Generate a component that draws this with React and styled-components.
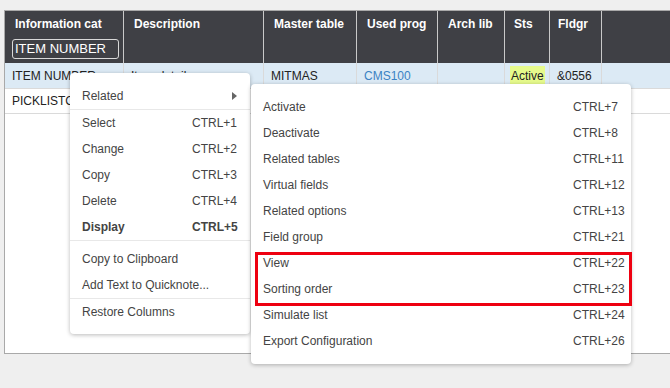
import React from "react";
import styled, { createGlobalStyle } from "styled-components";

const GlobalStyle = createGlobalStyle`
  html, body {
    margin: 0;
    padding: 0;
    background: #efefef;
    font-family: "Liberation Sans", Arial, sans-serif;
    overflow: hidden;
  }
`;

const Page = styled.div`
  position: relative;
  width: 670px;
  height: 388px;
  padding: 10px 0 0 4px;
  box-sizing: border-box;
  overflow: hidden;
`;

const Panel = styled.div`
  width: 666px;
  height: 344px;
  background: #fff;
  border: 1px solid #a9a9a9;
  border-right: none;
  box-sizing: border-box;
`;

const cols = "119px 140px 93px 81px 67px 45px 52px 1fr";

const HeaderRow = styled.div`
  display: grid;
  grid-template-columns: ${cols};
  height: 52px;
  background: #3f4045;
`;

const HeadCell = styled.div`
  border-right: 1px solid #c9c9c9;
  padding: 6px 0 0 ${(p) => p.$pad || 10}px;
  color: #fff;
  font-weight: bold;
  font-size: 12px;
  line-height: 14px;
  &:last-child {
    border-right: none;
  }
`;

const FilterInput = styled.div`
  margin: 8px 0 0 -3px;
  width: 107px;
  height: 20px;
  box-sizing: border-box;
  border: 1px solid #d8d8d8;
  border-radius: 3px;
  color: #fff;
  font-weight: normal;
  font-size: 13px;
  line-height: 18px;
  padding-left: 2px;
`;

const Row = styled.div`
  display: grid;
  grid-template-columns: ${cols};
  height: ${(p) => p.$h}px;
  background: ${(p) => (p.$selected ? "#dceaf5" : "#fff")};
  border-bottom: 1px solid #dadada;
  box-sizing: border-box;
`;

const Cell = styled.div`
  border-right: 1px solid #dadada;
  padding-left: ${(p) => p.$pad || 7}px;
  font-size: 12px;
  color: ${(p) => (p.$link ? "#3b82c4" : "#222")};
  display: flex;
  align-items: center;
  white-space: nowrap;
  overflow: hidden;
  &:last-child {
    border-right: none;
  }
`;

const StatusTag = styled.span`
  background: #e6fa8c;
  padding: 3px 1px;
`;

const Menu = styled.div`
  position: absolute;
  left: ${(p) => p.$left}px;
  top: ${(p) => p.$top}px;
  width: ${(p) => p.$width}px;
  padding: ${(p) => p.$padTop}px 0 ${(p) => p.$padBottom}px;
  background: #fff;
  border-radius: 4px;
  box-shadow: 0 1px 4px rgba(0, 0, 0, 0.28);
  box-sizing: border-box;
`;

const Item = styled.div`
  display: flex;
  align-items: center;
  height: 26px;
  padding-left: 12px;
  font-size: 12px;
  color: #444;
  font-weight: ${(p) => (p.$bold ? "bold" : "normal")};
`;

const Label = styled.span`
  flex: 1;
`;

const Shortcut = styled.span`
  width: 58px;
`;

const Arrow = styled.span`
  width: 0;
  height: 0;
  border-top: 4px solid transparent;
  border-bottom: 4px solid transparent;
  border-left: 5px solid #666;
  margin-right: 13px;
`;

const Divider = styled.div`
  height: 1px;
  background: #e8e8e8;
  margin-bottom: ${(p) => p.$after || 0}px;
`;

const Highlight = styled.div`
  position: relative;
  &::after {
    content: "";
    position: absolute;
    left: 4px;
    right: -1px;
    top: 2px;
    bottom: -4px;
    border: 3px solid #ee0010;
    pointer-events: none;
  }
`;

const MenuItem = ({ label, keys, bold }) => (
  <Item $bold={bold}>
    <Label>{label}</Label>
    {keys && <Shortcut>{keys}</Shortcut>}
  </Item>
);

export default function App() {
  return (
    <>
      <GlobalStyle />
      <Page>
        <Panel>
          <HeaderRow>
            <HeadCell>
              Information cat
              <FilterInput>ITEM NUMBER</FilterInput>
            </HeadCell>
            <HeadCell>Description</HeadCell>
            <HeadCell>Master table</HeadCell>
            <HeadCell>Used prog</HeadCell>
            <HeadCell>Arch lib</HeadCell>
            <HeadCell $pad={9}>Sts</HeadCell>
            <HeadCell $pad={8}>Fldgr</HeadCell>
            <HeadCell />
          </HeaderRow>
          <Row $selected $h={26}>
            <Cell>ITEM NUMBER</Cell>
            <Cell>Item detail</Cell>
            <Cell>MITMAS</Cell>
            <Cell $link>CMS100</Cell>
            <Cell />
            <Cell $pad={5}>
              <StatusTag>Active</StatusTag>
            </Cell>
            <Cell>&amp;0556</Cell>
            <Cell />
          </Row>
          <Row $h={25}>
            <Cell>PICKLISTCODE</Cell>
            <Cell />
            <Cell />
            <Cell />
            <Cell />
            <Cell />
            <Cell />
            <Cell />
          </Row>
        </Panel>

        <Menu $left={70} $top={73} $width={180} $padTop={10} $padBottom={9}>
          <Item>
            <Label>Related</Label>
            <Arrow />
          </Item>
          <Divider />
          <MenuItem label="Select" keys="CTRL+1" />
          <MenuItem label="Change" keys="CTRL+2" />
          <MenuItem label="Copy" keys="CTRL+3" />
          <MenuItem label="Delete" keys="CTRL+4" />
          <MenuItem label="Display" keys="CTRL+5" bold />
          <Divider $after={5} />
          <MenuItem label="Copy to Clipboard" />
          <MenuItem label="Add Text to Quicknote..." />
          <Divider />
          <MenuItem label="Restore Columns" />
        </Menu>

        <Menu $left={251} $top={84} $width={380} $padTop={10} $padBottom={10}>
          <MenuItem label="Activate" keys="CTRL+7" />
          <MenuItem label="Deactivate" keys="CTRL+8" />
          <MenuItem label="Related tables" keys="CTRL+11" />
          <MenuItem label="Virtual fields" keys="CTRL+12" />
          <MenuItem label="Related options" keys="CTRL+13" />
          <MenuItem label="Field group" keys="CTRL+21" />
          <Highlight>
            <MenuItem label="View" keys="CTRL+22" />
            <MenuItem label="Sorting order" keys="CTRL+23" />
          </Highlight>
          <MenuItem label="Simulate list" keys="CTRL+24" />
          <MenuItem label="Export Configuration" keys="CTRL+26" />
        </Menu>
      </Page>
    </>
  );
}
